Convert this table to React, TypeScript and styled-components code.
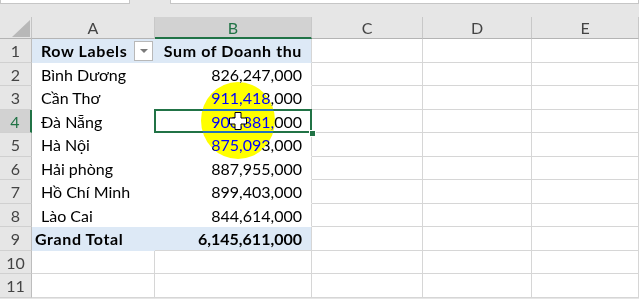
import styled, { createGlobalStyle, css } from "styled-components";

const GlobalStyle = createGlobalStyle`
  body {
    margin: 0;
    background: #ffffff;
    font-family: Lato, "Liberation Sans", sans-serif;
  }
`;

const Page = styled.div`
  width: 639px;
  height: 299px;
  overflow: hidden;
  background: #e6e6e6;
`;

// remains of the name box and formula bar at the very top
const TopStrip = styled.div`
  height: 17px;
  display: flex;
  gap: 40px;
`;

const TopBox = styled.div<{ $width?: number }>`
  height: 3px;
  background: #ffffff;
  border: 1px solid #c6c6c6;
  border-top: 0;
  ${(p) => (p.$width ? `width: ${p.$width}px;` : "flex: 1;")}
`;

const Sheet = styled.div`
  position: relative;
  display: grid;
  grid-template-columns: 32px 123px 157px 111px 109px 107px;
  grid-template-rows: 22px 24px 23px 24px 23px 24px 23px 24px 23px 24px 23px 24px;
  background: #ffffff;
`;

const Corner = styled.div`
  position: relative;
  background: #e6e6e6;
  border-right: 1px solid #c4c4c4;
  border-bottom: 1px solid #b4b4b4;
  box-sizing: border-box;

  &::after {
    content: "";
    position: absolute;
    left: 12px;
    top: 3px;
    width: 18px;
    height: 17px;
    background: #b8b8b8;
    clip-path: polygon(100% 0, 100% 100%, 0 100%);
  }
`;

const ColHead = styled.div<{ $active?: boolean }>`
  display: flex;
  align-items: center;
  justify-content: center;
  box-sizing: border-box;
  font-size: 16px;
  color: ${(p) => (p.$active ? "#217346" : "#444444")};
  background: ${(p) => (p.$active ? "#d2d2d2" : "#e6e6e6")};
  border-right: 1px solid #c8c8c8;
  border-bottom: ${(p) => (p.$active ? "2px solid #217346" : "1px solid #b4b4b4")};
`;

const RowHead = styled.div<{ $active?: boolean }>`
  display: flex;
  align-items: center;
  justify-content: center;
  box-sizing: border-box;
  font-size: 16px;
  color: ${(p) => (p.$active ? "#217346" : "#444444")};
  background: ${(p) => (p.$active ? "#d2d2d2" : "#e6e6e6")};
  border-bottom: 1px solid #d0d0d0;
  border-right: ${(p) => (p.$active ? "2px solid #217346" : "1px solid #bdbdbd")};
`;

const Cell = styled.div<{
  $fill?: boolean;
  $bold?: boolean;
  $spaced?: boolean;
  $right?: boolean;
  $indent?: number;
  $lineRight?: boolean;
  $lineBottom?: boolean;
  $selected?: boolean;
}>`
  display: flex;
  align-items: center;
  box-sizing: border-box;
  font-size: 16px;
  color: #000000;
  white-space: nowrap;
  background: ${(p) => (p.$fill ? "#dde9f6" : "#ffffff")};
  font-weight: ${(p) => (p.$bold ? 700 : 400)};
  letter-spacing: ${(p) => (p.$spaced ? "0.6px" : "normal")};
  justify-content: ${(p) => (p.$right ? "flex-end" : "flex-start")};
  padding-left: ${(p) => p.$indent ?? 3}px;
  padding-right: ${(p) => (p.$right ? 9 : 1)}px;
  border-right: 1px solid ${(p) => (p.$lineRight ? "#d6d6d6" : "transparent")};
  border-bottom: 1px solid ${(p) => (p.$lineBottom ? "#d6d6d6" : "transparent")};

  ${(p) =>
    p.$selected &&
    css`
      position: relative;
      &::after {
        content: "";
        position: absolute;
        inset: -1px;
        border: 2px solid #217346;
      }
      &::before {
        content: "";
        position: absolute;
        right: -5px;
        bottom: -5px;
        width: 5px;
        height: 5px;
        background: #217346;
        border: 1px solid #ffffff;
        z-index: 1;
      }
    `}
`;

const FilterButton = styled.div`
  margin-left: auto;
  width: 19px;
  height: 20px;
  box-sizing: border-box;
  background: #ffffff;
  border: 1px solid #b8b8b8;
  display: flex;
  align-items: center;
  justify-content: center;

  &::after {
    content: "";
    border-left: 4px solid transparent;
    border-right: 4px solid transparent;
    border-top: 4px solid #7a7a7a;
  }
`;

// yellow cursor highlight from the screen recording: difference blend
// turns white into yellow and black text into blue
const Highlight = styled.div`
  position: absolute;
  left: 201px;
  top: 65px;
  width: 74px;
  height: 77px;
  border-radius: 50%;
  background: #0000ff;
  mix-blend-mode: difference;
  pointer-events: none;
`;

const Pointer = styled.svg`
  position: absolute;
  left: 228px;
  top: 94px;
  pointer-events: none;
`;

type Row = { label: string; value: string };

const data: Row[] = [
  { label: "Bình Dương", value: "826,247,000" },
  { label: "Cần Thơ", value: "911,418,000" },
  { label: "Đà Nẵng", value: "900,881,000" },
  { label: "Hà Nội", value: "875,093,000" },
  { label: "Hải phòng", value: "887,955,000" },
  { label: "Hồ Chí Minh", value: "899,403,000" },
  { label: "Lào Cai", value: "844,614,000" },
];

const EmptyCols = () => (
  <>
    <Cell $lineRight $lineBottom />
    <Cell $lineRight $lineBottom />
    <Cell $lineRight $lineBottom />
  </>
);

const App: React.FC = () => {
  return (
    <Page>
      <GlobalStyle />
      <TopStrip>
        <TopBox $width={128} />
        <TopBox />
      </TopStrip>
      <Sheet>
        <Corner />
        <ColHead>A</ColHead>
        <ColHead $active>B</ColHead>
        <ColHead>C</ColHead>
        <ColHead>D</ColHead>
        <ColHead>E</ColHead>

        <RowHead>1</RowHead>
        <Cell $fill $bold $spaced $indent={9}>
          Row Labels
          <FilterButton />
        </Cell>
        <Cell $fill $bold $spaced $right $lineRight>
          Sum of Doanh thu
        </Cell>
        <EmptyCols />

        {data.map((row, i) => (
          <div key={row.label} style={{ display: "contents" }}>
            <RowHead $active={i === 2}>{i + 2}</RowHead>
            <Cell $indent={9}>{row.label}</Cell>
            <Cell $right $lineRight $selected={i === 2}>
              {row.value}
            </Cell>
            <EmptyCols />
          </div>
        ))}

        <RowHead>9</RowHead>
        <Cell $fill $bold $spaced>
          Grand Total
        </Cell>
        <Cell $fill $bold $right $lineRight $lineBottom>
          6,145,611,000
        </Cell>
        <EmptyCols />

        {[10, 11].map((n) => (
          <div key={n} style={{ display: "contents" }}>
            <RowHead>{n}</RowHead>
            <Cell $lineRight $lineBottom />
            <Cell $lineRight $lineBottom />
            <EmptyCols />
          </div>
        ))}

        <Highlight />
        <Pointer width="20" height="20" viewBox="0 0 20 20">
          <path
            d="M7 1.5 H13 V7 H18.5 V13 H13 V18.5 H7 V13 H1.5 V7 H7 Z"
            fill="#ffffff"
            stroke="#000000"
            strokeWidth="1"
          />
        </Pointer>
      </Sheet>
    </Page>
  );
};

export default App;
